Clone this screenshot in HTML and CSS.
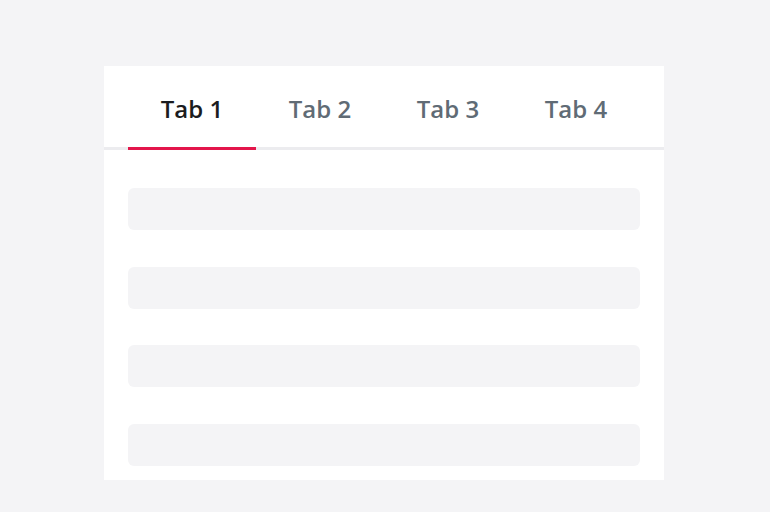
FILE: index.html
```html
<!DOCTYPE html>
<html>
<head>
<meta charset="utf-8">
<link rel="stylesheet" href="styles.css">
</head>
<body>
<div class="card">
  <div class="tabs">
    <div class="tab active">Tab 1</div>
    <div class="tab">Tab 2</div>
    <div class="tab">Tab 3</div>
    <div class="tab">Tab 4</div>
  </div>
  <div class="content">
    <div class="bar"></div>
    <div class="bar"></div>
    <div class="bar"></div>
    <div class="bar"></div>
  </div>
</div>
</body>
</html>
```

FILE: styles.css
```css
html, body {
  margin: 0;
  padding: 0;
  background: #f4f4f6;
}
body {
  width: 770px;
  height: 512px;
  padding-top: 66px;
  box-sizing: border-box;
  font-family: "Open Sans", sans-serif;
}
.card {
  margin-left: 104px;
  width: 560px;
  height: 414px;
  background: #ffffff;
  box-sizing: border-box;
}
.tabs {
  display: flex;
  padding: 0 24px;
  border-bottom: 3px solid #ececef;
  height: 81px;
}
.tab {
  width: 128px;
  box-sizing: border-box;
  display: flex;
  align-items: center;
  justify-content: center;
  padding-top: 3px;
  font-size: 24px;
  font-weight: 600;
  color: #606b75;
  border-bottom: 3px solid transparent;
  margin-bottom: -3px;
  height: 84px;
}
.tab.active {
  color: #1b1c1e;
  border-bottom-color: #e3164b;
}
.content {
  display: flex;
  flex-direction: column;
  gap: 36.7px;
  padding: 38px 24px 0;
}
.bar {
  height: 42px;
  border-radius: 6px;
  background: #f4f4f6;
}
```
